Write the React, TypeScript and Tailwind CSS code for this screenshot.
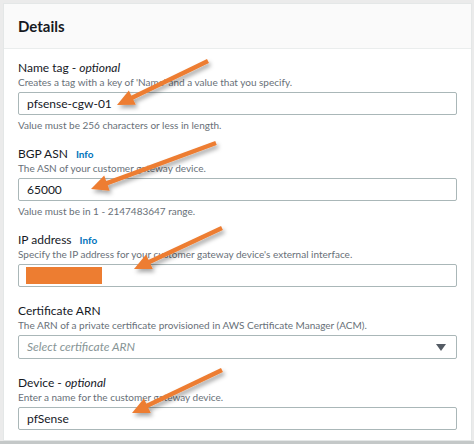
import React from "react";

const font = { fontFamily: "Lato, 'Open Sans', Arial, sans-serif" };

function Arrow({ x1, y1, x2, y2 }: { x1: number; y1: number; x2: number; y2: number }) {
  const dx = x2 - x1;
  const dy = y2 - y1;
  const len = Math.sqrt(dx * dx + dy * dy);
  const ux = dx / len;
  const uy = dy / len;
  const px = -uy;
  const py = ux;
  const hl = 17;
  const hw = 8;
  const bx = x2 - ux * hl;
  const by = y2 - uy * hl;
  const pts = `${x2},${y2} ${bx + px * hw},${by + py * hw} ${bx - px * hw},${by - py * hw}`;
  return (
    <g>
      <line x1={x1} y1={y1} x2={bx + ux * 2} y2={by + uy * 2} stroke="#ed7d31" strokeWidth={4.5} strokeLinecap="butt" />
      <polygon points={pts} fill="#ed7d31" />
    </g>
  );
}

function Field({
  label,
  optional,
  info,
  desc,
  children,
  hint,
  className,
}: {
  label: string;
  optional?: boolean;
  info?: boolean;
  desc: string;
  children: React.ReactNode;
  hint?: string;
  className?: string;
}) {
  return (
    <div className={`flex flex-col ${className ?? ""}`}>
      <div className="text-[12px] leading-[16px] text-[#16191f] flex items-baseline">
        <span>{label}</span>
        {optional && (
          <span>
            &nbsp;- <i>optional</i>
          </span>
        )}
        {info && <span className="ml-[8px] text-[10px] font-bold text-[#0073bb]">Info</span>}
      </div>
      <div className="text-[10px] leading-[12px] text-[#687078] whitespace-nowrap">{desc}</div>
      {children}
      {hint && <div className="mt-[4px] text-[10px] leading-[12px] text-[#687078] whitespace-nowrap">{hint}</div>}
    </div>
  );
}

function Input({ value, children }: { value?: string; children?: React.ReactNode }) {
  return (
    <div className="mt-[4px] h-[23px] w-[439px] border border-[#aab7b8] rounded-[2px] bg-white flex items-center px-[8px] text-[12px] text-[#16191f]">
      {value}
      {children}
    </div>
  );
}

export default function App() {
  return (
    <div className="relative w-[474px] h-[444px] bg-[#ebebeb] overflow-hidden" style={font}>
      <div className="absolute left-0 right-0 bottom-0 h-[3px] bg-[#c4c8c8]" />
      <div className="ml-[3px] pt-[3px] w-[469px]">
        <div className="h-[438px] bg-white border border-[#e4e7e7] flex flex-col">
          <div className="h-[45px] bg-[#fafafa] border-b border-[#eaeded] flex items-center px-[14px] shrink-0">
            <span className="text-[15px] font-bold text-[#16191f]">Details</span>
          </div>
          <div className="px-[14px] pt-[11px]">
            <Field
              label="Name tag"
              optional
              desc="Creates a tag with a key of 'Name' and a value that you specify."
              hint="Value must be 256 characters or less in length."
            >
              <Input value="pfsense-cgw-01" />
            </Field>
            <Field
              className="mt-[15px]"
              label="BGP ASN"
              info
              desc="The ASN of your customer gateway device."
              hint="Value must be in 1 - 2147483647 range."
            >
              <Input value="65000" />
            </Field>
            <Field
              className="mt-[15px]"
              label="IP address"
              info
              desc="Specify the IP address for your customer gateway device's external interface."
            >
              <Input>
                <div className="w-[76px] h-[17px] bg-[#ed7d31] -ml-[1px]" />
              </Input>
            </Field>
            <Field
              className="mt-[16px]"
              label="Certificate ARN"
              desc="The ARN of a private certificate provisioned in AWS Certificate Manager (ACM)."
            >
              <div className="mt-[4px] h-[24px] w-[439px] border border-[#aab7b8] rounded-[2px] bg-white flex items-center justify-between px-[8px] text-[12px]">
                <span className="italic text-[#879596]">Select certificate ARN</span>
                <svg width="10" height="7" viewBox="0 0 10 7" className="mr-[2px]">
                  <polygon points="0,0 10,0 5,7" fill="#545b64" />
                </svg>
              </div>
            </Field>
            <Field
              className="mt-[16px]"
              label="Device"
              optional
              desc="Enter a name for the customer gateway device."
            >
              <Input value="pfSense" />
            </Field>
          </div>
        </div>
      </div>
      <svg className="absolute inset-0 pointer-events-none" width="474" height="444">
        <defs>
          <filter id="sh" x="-20%" y="-20%" width="140%" height="140%">
            <feDropShadow dx="2" dy="3" stdDeviation="2" floodColor="#000" floodOpacity="0.35" />
          </filter>
        </defs>
        <g filter="url(#sh)">
          <Arrow x1={208} y1={61} x2={117} y2={105} />
          <Arrow x1={216} y1={143} x2={91} y2={189} />
          <Arrow x1={222} y1={228} x2={134} y2={269} />
          <Arrow x1={222} y1={370} x2={132} y2={413} />
        </g>
      </svg>
    </div>
  );
}
